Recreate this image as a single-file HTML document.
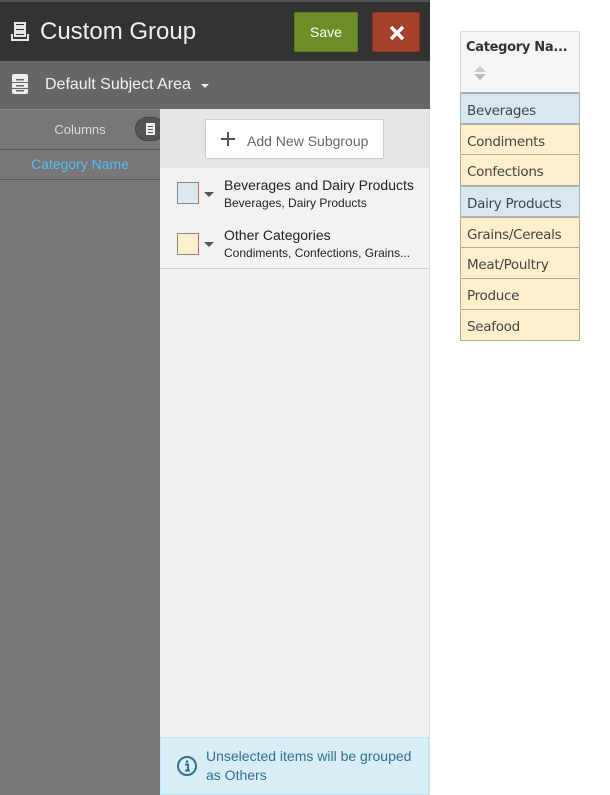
<!DOCTYPE html>
<html><head><meta charset="utf-8"><style>
*{box-sizing:border-box;margin:0;padding:0}
body{width:610px;height:795px;background:#fff;font-family:"Liberation Sans",Arial,sans-serif;position:relative;overflow:hidden}
.abs{position:absolute}
#top{left:0;top:0;width:430px;height:61px;background:#333;border-top:2px solid #555}
#sub{left:0;top:61px;width:430px;height:48px;background:#666}
#leftcol{left:0;top:109px;width:160px;height:686px;background:#777}
#mid{left:160px;top:109px;width:270px;height:686px;background:#f0f0f0;border-right:1px solid #ddd;z-index:2}
.row{position:absolute;left:460px;width:120px;height:31px;border:1px solid #b4ab94;border-top:none;color:#444;padding:9px 0 0 6px;font-family:"DejaVu Sans",sans-serif;font-size:13.5px;letter-spacing:-0.3px}
.y{background:#fff0cd}.b{background:#d9e7f1;border-color:#a9b3bb}
</style></head><body>
<div id="top" class="abs">
  <svg class="abs" style="left:10px;top:19px" width="20" height="22" viewBox="0 0 20 22"><g fill="none" stroke="#e6e6e6" stroke-width="2"><rect x="5" y="2" width="10" height="3"/><rect x="5" y="7" width="10" height="3"/><rect x="5" y="12" width="10" height="3"/><path d="M2 13v6h16v-6"/></g></svg>
  <div class="abs" style="left:40px;top:16px;font-size:24px;color:#eee">Custom Group</div>
  <div class="abs" style="left:294px;top:10px;width:64px;height:40px;background:#6e8f27;border:1px solid #5d7b1f;border-radius:2px;color:#fff;font-size:14px;text-align:center;line-height:38px">Save</div>
  <div class="abs" style="left:372px;top:10px;width:48px;height:40px;background:#a5402a;border:1px solid #8d3522;border-radius:2px">
    <svg class="abs" style="left:16px;top:12px" width="16" height="16"><path d="M2 2L14 14M14 2L2 14" stroke="#fff" stroke-width="3.5"/></svg></div>
</div>
<div id="sub" class="abs">
  <svg class="abs" style="left:11px;top:12px" width="18" height="22" viewBox="0 0 18 22"><rect x="1" y="1" width="16" height="20" rx="2" fill="#eee"/><g fill="#666"><rect x="5" y="6" width="8" height="1.5"/><rect x="5" y="12" width="8" height="1.5"/><rect x="5" y="17" width="8" height="1.5"/><rect x="1" y="9" width="16" height="1"/><rect x="1" y="15" width="16" height="1"/></g></svg>
  <div class="abs" style="left:45px;top:15px;font-size:16px;color:#f2f2f2">Default Subject Area</div>
  <div class="abs" style="left:201px;top:23px;border-left:4px solid transparent;border-right:4px solid transparent;border-top:4px solid #eee"></div>
</div>
<div id="leftcol" class="abs">
  <div class="abs" style="left:0;top:0;width:160px;height:1px;background:#888"></div>
  <div class="abs" style="left:0;top:13px;width:160px;text-align:center;font-size:13px;color:#ddd">Columns</div>
  <div class="abs" style="left:135px;top:8px;width:30px;height:24px;border-radius:12px;background:#555;border:1px solid #444"></div>
  <svg class="abs" style="left:146px;top:14px" width="10" height="13"><rect width="9" height="12" fill="#eee"/><rect x="2" y="3" width="5" height="1" fill="#555"/><rect x="2" y="6" width="5" height="1" fill="#555"/><rect x="2" y="9" width="5" height="1" fill="#555"/></svg>
  <div class="abs" style="left:0;top:40px;width:160px;height:1px;background:#5a5a5a"></div>
  <div class="abs" style="left:0;top:47px;width:160px;text-align:center;font-size:14px;color:#5bbcf2">Category Name</div>
  <div class="abs" style="left:0;top:70px;width:160px;height:1px;background:#5a5a5a"></div>
</div>
<div id="mid" class="abs">
  <div class="abs" style="left:0;top:0;width:269px;height:59px;background:#e5e5e5"></div>
  <div class="abs" style="left:45px;top:10px;width:179px;height:40px;background:#fff;border:1px solid #ccc;border-radius:2px"></div>
  <svg class="abs" style="left:61px;top:23px" width="14" height="14"><path d="M7 0v14M0 7h14" stroke="#555" stroke-width="2"/></svg>
  <div class="abs" style="left:87px;top:24px;font-size:14px;color:#666">Add New Subgroup</div>
  <div class="abs" style="left:0;top:59px;width:269px;height:101px;background:#f2f2f2;border-bottom:1px solid #d0d0d0"></div>
  <div class="abs" style="left:17px;top:73px;width:22px;height:22px;background:#dbe7f1;border:1px solid #888;border-right-color:#c66"></div>
  <div class="abs" style="left:44px;top:83px;border-left:5px solid transparent;border-right:5px solid transparent;border-top:5px solid #555"></div>
  <div class="abs" style="left:64px;top:68px;font-size:14px;color:#222">Beverages and Dairy Products</div>
  <div class="abs" style="left:64px;top:87px;font-size:12px;color:#222">Beverages, Dairy Products</div>
  <div class="abs" style="left:17px;top:124px;width:22px;height:22px;background:#fff0cd;border:1px solid #888;border-right-color:#c66"></div>
  <div class="abs" style="left:44px;top:133px;border-left:5px solid transparent;border-right:5px solid transparent;border-top:5px solid #555"></div>
  <div class="abs" style="left:64px;top:118px;font-size:14px;color:#222">Other Categories</div>
  <div class="abs" style="left:64px;top:137px;font-size:12px;color:#222">Condiments, Confections, Grains...</div>
  <div class="abs" style="left:0;top:628px;width:269px;height:58px;background:#d9edf7;border:1px solid #bce8f1"></div>
  <svg class="abs" style="left:16px;top:646px" width="22" height="22" viewBox="0 0 22 22"><circle cx="11" cy="11" r="9" fill="none" stroke="#31708f" stroke-width="2"/><circle cx="11" cy="6.5" r="1.3" fill="#31708f"/><path d="M9 9.5h3v6M9 15.5h5" stroke="#31708f" stroke-width="2" fill="none"/></svg>
  <div class="abs" style="left:46px;top:638px;font-size:14px;line-height:19px;color:#31708f;width:215px">Unselected items will be grouped as Others</div>
</div>
<div class="abs" style="left:460px;top:31px;width:120px;height:62px;background:#f6f6f6;border:1px solid #ddd;border-bottom:1px solid #aaa"></div>
<div class="abs" style="left:466px;top:40px;font-family:'DejaVu Sans',sans-serif;font-weight:bold;font-size:13px;color:#333;letter-spacing:-0.3px">Category Na...</div>
<div class="abs" style="left:474px;top:66px;border-left:6px solid transparent;border-right:6px solid transparent;border-bottom:6px solid #ccc"></div>
<div class="abs" style="left:474px;top:74px;border-left:6px solid transparent;border-right:6px solid transparent;border-top:6px solid #bbb"></div>
<div class="row b" style="top:93px;border-top:1px solid #a9b3bb">Beverages</div>
<div class="row y" style="top:124px;border-top:1px solid #b4ab94">Condiments</div>
<div class="row y" style="top:155px">Confections</div>
<div class="row b" style="top:186px;border-top:1px solid #a9b3bb">Dairy Products</div>
<div class="row y" style="top:217px;border-top:1px solid #b4ab94">Grains/Cereals</div>
<div class="row y" style="top:248px">Meat/Poultry</div>
<div class="row y" style="top:279px">Produce</div>
<div class="row y" style="top:310px">Seafood</div>
</body></html>
